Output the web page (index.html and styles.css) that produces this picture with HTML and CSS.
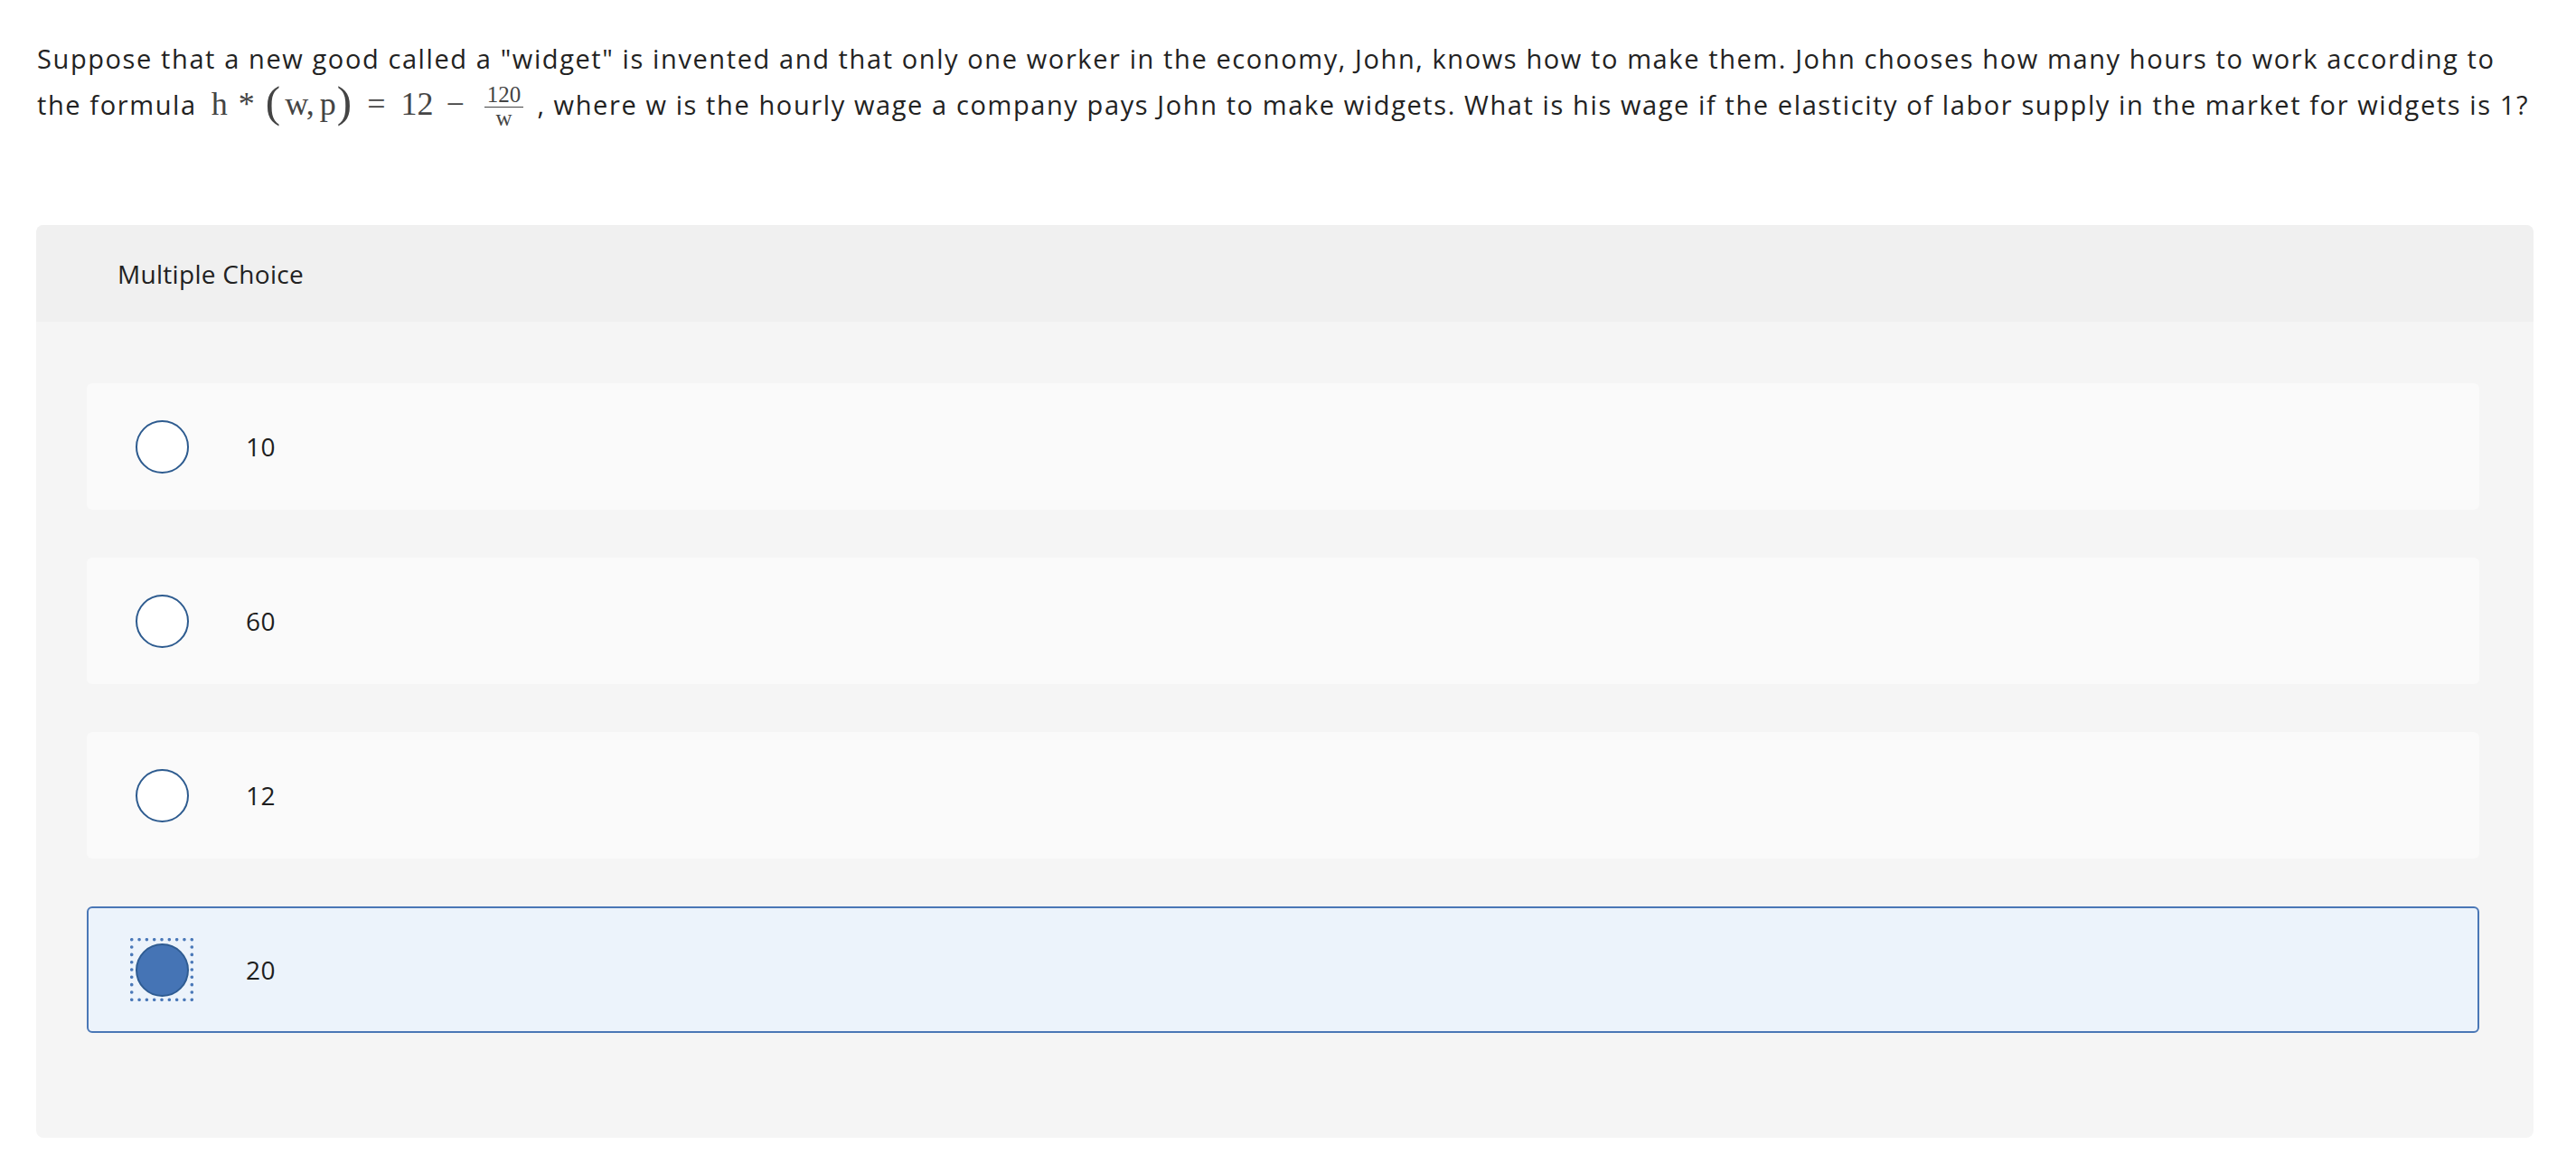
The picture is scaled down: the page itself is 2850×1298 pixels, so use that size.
FILE: index.html
```html
<!DOCTYPE html>
<html lang="en">
<head>
<meta charset="utf-8">
<title>Multiple Choice</title>
<link rel="stylesheet" href="styles.css">
</head>
<body>
<main class="page">
  <p class="question">Suppose that a new good called a "widget" is invented and that only one worker in the economy, John, knows how to make them. John chooses how many hours to work according to the formula <span class="math"><span class="mi">h</span><span class="mo star">*</span><span class="paren lp">(</span><span class="mi">w</span><span class="comma">,</span><span class="mi">p</span><span class="paren rp">)</span><span class="mo rel">=</span><span class="mn">12</span><span class="mo bin">−</span><span class="frac"><span class="num">120</span><span class="den">w</span></span></span> , where w is the hourly wage a company pays John to make widgets. What is his wage if the elasticity of labor supply in the market for widgets is 1?</p>

  <section class="panel">
    <header class="panel-head">Multiple Choice</header>
    <div class="panel-body">
      <label class="option">
        <span class="focus"><span class="radio"></span></span>
        <span class="label">10</span>
      </label>
      <label class="option">
        <span class="focus"><span class="radio"></span></span>
        <span class="label">60</span>
      </label>
      <label class="option">
        <span class="focus"><span class="radio"></span></span>
        <span class="label">12</span>
      </label>
      <label class="option selected">
        <span class="focus"><span class="radio"></span><svg class="ring" width="70" height="70" viewBox="0 0 70 70" aria-hidden="true"><rect x="1.75" y="1.75" width="66.5" height="66.5" fill="none" stroke="#4a78b8" stroke-width="3.6" stroke-linecap="round" stroke-dasharray="0 8.3125"/></svg></span>
        <span class="label">20</span>
      </label>
    </div>
  </section>
</main>
</body>
</html>
```

FILE: styles.css
```css
html, body {
  margin: 0;
  padding: 0;
  background: #ffffff;
}

body {
  font-family: "Open Sans", "Noto Sans", "Liberation Sans", sans-serif;
  color: #222222;
}

.page {
  padding: 39px 47px 40px 41px;
}

.question {
  margin: 0;
  max-width: 2780px;
  font-size: 29px;
  line-height: 51px;
  letter-spacing: 1.6px;
  color: #222222;
}

.math {
  font-family: "Liberation Serif", "DejaVu Serif", serif;
  font-size: 36px;
  line-height: 0;
  color: #444444;
  letter-spacing: 0;
  margin-left: 7px;
  white-space: nowrap;
}

.star {
  margin: 0 12px 0 12px;
}

.paren {
  font-size: 49px;
  vertical-align: -2px;
}

.lp { margin-right: 5px; }

.comma { margin-right: 6px; }

.rp { margin-left: 1px; }

.rel { margin: 0 17px 0 17px; }

.bin { margin: 0 20px 0 14px; }

.frac {
  display: inline-flex;
  flex-direction: column;
  align-items: center;
  vertical-align: 14px;
  margin: -12px 6px -12px 2px;
  font-size: 25px;
  line-height: 20px;
}

.num {
  padding: 0 3px 3px;
  border-bottom: 1.5px solid #444444;
}

.den {
  padding-top: 2px;
}

.panel {
  margin-top: 108px;
  background: #f5f5f5;
  border-radius: 8px;
  overflow: hidden;
  width: 2763px;
  margin-left: -1px;
}

.panel-head {
  height: 107px;
  display: flex;
  align-items: center;
  padding-left: 90px;
  background: #f0f0f0;
  font-size: 28px;
  letter-spacing: 0.3px;
  color: #222222;
}

.panel-body {
  display: flex;
  flex-direction: column;
  gap: 53px;
  padding: 68px 60px 116px 56px;
}

.option {
  display: flex;
  align-items: center;
  height: 140px;
  box-sizing: border-box;
  padding-left: 46px;
  background: #fafafa;
  border: 2px solid transparent;
  border-radius: 6px;
}

.option.selected {
  background: #ecf3fb;
  border-color: #4a77b6;
}

.focus {
  position: relative;
  width: 70px;
  height: 70px;
  display: flex;
  align-items: center;
  justify-content: center;
}

.ring {
  position: absolute;
  left: 0;
  top: 0;
}

.radio {
  width: 59px;
  height: 59px;
  box-sizing: border-box;
  border-radius: 50%;
  border: 2px solid #2d5b8f;
  background: #ffffff;
}

.selected .radio {
  background: #4574b5;
  border-color: #2f5c92;
}

.label {
  margin-left: 58px;
  font-size: 28px;
  letter-spacing: 0.5px;
  color: #1e1e1e;
}
```
